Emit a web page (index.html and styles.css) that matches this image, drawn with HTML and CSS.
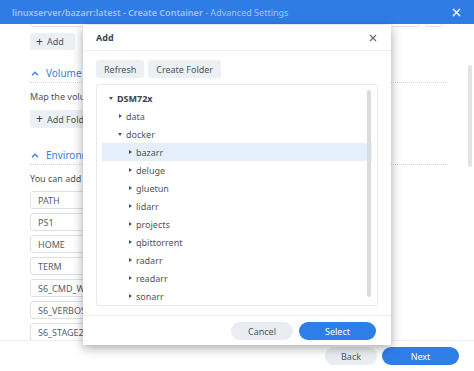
FILE: index.html
```html
<!DOCTYPE html>
<html lang="en">
<head>
  <meta charset="UTF-8">
  <title>Create Container - Advanced Settings</title>
  <link rel="stylesheet" href="styles.css">
</head>
<body>
  <div class="window">
    <div class="win-head">
      <div class="win-title"><b>linuxserver/bazarr:latest - Create Container</b> - Advanced Settings</div>
      <svg class="win-close" width="9" height="9" viewBox="0 0 9 9"><path d="M1 1L8 8M8 1L1 8" stroke="#fff" stroke-width="1.4"/></svg>
    </div>

    <div class="win-body">
      <div class="cut-row">
        <div class="field wide"></div>
        <div class="field tiny"></div>
      </div>
      <button class="btn-light add-btn"><span class="plus">+</span>Add</button>

      <div class="section-head vol-head">
        <svg width="8" height="5" viewBox="0 0 8 5"><path d="M1 4.2L4 1.2L7 4.2" fill="none" stroke="#3b80d8" stroke-width="1.4"/></svg>
        <span class="clip">Volume Settings</span>
      </div>
      <p class="hint">Map the volumes (folders) of the container to a folder on the NAS.</p>
      <button class="btn-light add-btn folder-btn"><span class="plus">+</span>Add Folder</button>

      <div class="section-head env-head">
        <svg width="8" height="5" viewBox="0 0 8 5"><path d="M1 4.2L4 1.2L7 4.2" fill="none" stroke="#3b80d8" stroke-width="1.4"/></svg>
        <span class="clip">Environment</span>
      </div>
      <p class="hint env-hint">You can add environment variables to the container.</p>
      <div class="env-list">
        <div class="field env">PATH</div>
        <div class="field env">PS1</div>
        <div class="field env">HOME</div>
        <div class="field env">TERM</div>
        <div class="field env">S6_CMD_WAIT_FOR_SERVICES_MAXTIME</div>
        <div class="field env">S6_VERBOSITY</div>
        <div class="field env">S6_STAGE2_HOOK</div>
      </div>

      <div class="win-scroll"></div>
    </div>

    <div class="win-foot">
      <button class="pill grey">Back</button>
      <button class="pill blue next">Next</button>
    </div>
  </div>

  <div class="modal">
    <div class="modal-head">
      <span class="modal-title">Add</span>
      <svg width="8" height="8" viewBox="0 0 8 8"><path d="M1 1L7 7M7 1L1 7" stroke="#6b6b6b" stroke-width="1.2"/></svg>
    </div>
    <div class="modal-body">
      <div class="toolbar">
        <button class="btn-light tool">Refresh</button>
        <button class="btn-light tool">Create Folder</button>
      </div>
      <div class="tree">
        <div class="row lv0 root"><i class="caret down"></i>DSM72x</div>
        <div class="row lv1"><i class="caret"></i>data</div>
        <div class="row lv1"><i class="caret down"></i>docker</div>
        <div class="row lv2 selected"><i class="caret"></i>bazarr</div>
        <div class="row lv2"><i class="caret"></i>deluge</div>
        <div class="row lv2"><i class="caret"></i>gluetun</div>
        <div class="row lv2"><i class="caret"></i>lidarr</div>
        <div class="row lv2"><i class="caret"></i>projects</div>
        <div class="row lv2"><i class="caret"></i>qbittorrent</div>
        <div class="row lv2"><i class="caret"></i>radarr</div>
        <div class="row lv2"><i class="caret"></i>readarr</div>
        <div class="row lv2"><i class="caret"></i>sonarr</div>
        <div class="tree-scroll"></div>
      </div>
    </div>
    <div class="modal-foot">
      <button class="pill grey cancel">Cancel</button>
      <button class="pill blue select">Select</button>
    </div>
  </div>
</body>
</html>
```

FILE: styles.css
```css
body {
  margin: 0;
  width: 474px;
  height: 371px;
  overflow: hidden;
  font-family: "Noto Sans", "Open Sans", sans-serif;
  font-size: 9px;
  color: #4a535d;
  background: #ffffff;
  position: relative;
}
button {
  font-family: inherit;
  font-size: 9px;
  border: none;
  padding: 0;
  cursor: pointer;
}
.window {
  width: 474px;
  height: 371px;
  display: flex;
  flex-direction: column;
}
.win-head {
  height: 24px;
  flex: none;
  background: #2f7de4;
  display: flex;
  align-items: center;
  justify-content: space-between;
  padding: 0 13px 0 12px;
  position: relative;
  z-index: 2;
}
.win-title {
  color: rgba(255, 255, 255, 0.55);
  font-size: 9px;
  white-space: nowrap;
}
.win-title b {
  font-weight: 600;
}
.win-body {
  flex: 1;
  overflow: hidden;
  padding: 0 26px 0 30px;
  position: relative;
}
.cut-row {
  display: flex;
  gap: 5px;
  margin-top: -15px;
}
.field {
  height: 18px;
  box-sizing: border-box;
  border: 1px solid #dde1e6;
  border-radius: 3px;
  background: #fff;
  display: flex;
  align-items: center;
  padding-left: 7px;
  color: #56606a;
  white-space: nowrap;
  overflow: hidden;
}
.wide { width: 390px; }
.tiny { width: 18px; }
.btn-light {
  background: #eceff3;
  color: #4d5761;
  border-radius: 3px;
  height: 18px;
}
.add-btn {
  display: flex;
  align-items: center;
  margin-top: 6px;
  width: 45px;
  height: 17px;
  padding-left: 6px;
  overflow: hidden;
  white-space: nowrap;
}
.plus {
  font-size: 12px;
  line-height: 1;
  margin-right: 4px;
  color: #3d4650;
}
.folder-btn {
  width: 60px;
  height: 18px;
  margin-top: 7px;
}
.section-head {
  height: 18px;
  display: flex;
  align-items: center;
  gap: 7px;
  color: #3b80d8;
  font-size: 10px;
  padding-left: 1px;
  border-bottom: 1px dotted #d5d9de;
}
.clip {
  width: 40px;
  overflow: hidden;
  white-space: nowrap;
}
.vol-head { margin-top: 14px; }
.env-head { margin-top: 18px; }
.hint {
  margin: 8px 0 0;
  width: 58px;
  overflow: hidden;
  line-height: 12px;
  white-space: nowrap;
}
.env-hint { margin-top: 8px; }
.env-list {
  margin-top: 6px;
  display: flex;
  flex-direction: column;
  gap: 4px;
}
.env { width: 60px; }
.win-scroll {
  position: absolute;
  right: 2px;
  top: 41px;
  width: 4px;
  height: 102px;
  border-radius: 2px;
  background: #e1e3e6;
}
.win-foot {
  height: 31px;
  flex: none;
  box-sizing: border-box;
  border-top: 1px solid #eceef0;
  display: flex;
  justify-content: flex-end;
  align-items: flex-start;
  gap: 5px;
  padding: 6px 15px 0 0;
}
.pill {
  height: 18px;
  border-radius: 9px;
}
.pill.grey {
  background: #e9edf1;
  color: #4d5660;
  width: 52px;
}
.pill.blue {
  background: #2f7ee8;
  color: #fff;
  width: 77px;
}

/* folder picker dialog */
.modal {
  position: absolute;
  left: 83px;
  top: 25px;
  width: 308px;
  height: 320px;
  background: #fff;
  box-shadow: 0 3px 10px rgba(0, 0, 0, 0.35);
  display: flex;
  flex-direction: column;
  z-index: 3;
}
.modal-head {
  height: 26px;
  flex: none;
  box-sizing: border-box;
  border-bottom: 1px solid #ebedf0;
  display: flex;
  align-items: center;
  justify-content: space-between;
  padding: 0 14px 0 13px;
}
.modal-title {
  font-weight: bold;
  color: #3c444d;
}
.modal-body {
  flex: 1;
  padding: 9px 13px 0;
  border-bottom: 1px solid #ebedf0;
}
.toolbar {
  display: flex;
  gap: 4px;
}
.tool {
  height: 18px;
  padding: 0 8px;
}
.tree {
  margin-top: 6px;
  height: 222px;
  box-sizing: border-box;
  border: 1px solid #e8eaed;
  border-radius: 3px;
  padding: 4px 5px 0;
  overflow: hidden;
  position: relative;
}
.row {
  height: 18px;
  display: flex;
  align-items: center;
  color: #4d5660;
  white-space: nowrap;
}
.row.root {
  font-weight: bold;
  color: #3a424b;
}
.row.selected {
  background: #e5effb;
}
.lv0 { padding-left: 5px; }
.lv1 { padding-left: 14px; }
.lv2 { padding-left: 24px; }
.caret {
  width: 8px;
  height: 8px;
  margin-right: 2px;
  display: flex;
  align-items: center;
  justify-content: center;
}
.caret::before {
  content: "";
  border-left: 3px solid #4b535c;
  border-top: 2.5px solid transparent;
  border-bottom: 2.5px solid transparent;
}
.caret.down::before {
  border-top: 3px solid #4b535c;
  border-left: 2.5px solid transparent;
  border-right: 2.5px solid transparent;
  border-bottom: none;
}
.tree-scroll {
  position: absolute;
  right: 6px;
  top: 5px;
  width: 4px;
  height: 207px;
  border-radius: 2px;
  background: #d9dcdf;
}
.modal-foot {
  height: 29px;
  flex: none;
  display: flex;
  justify-content: flex-end;
  gap: 6px;
  padding: 6px 15px 0 0;
  box-sizing: border-box;
}
.cancel { width: 62px !important; }
```
